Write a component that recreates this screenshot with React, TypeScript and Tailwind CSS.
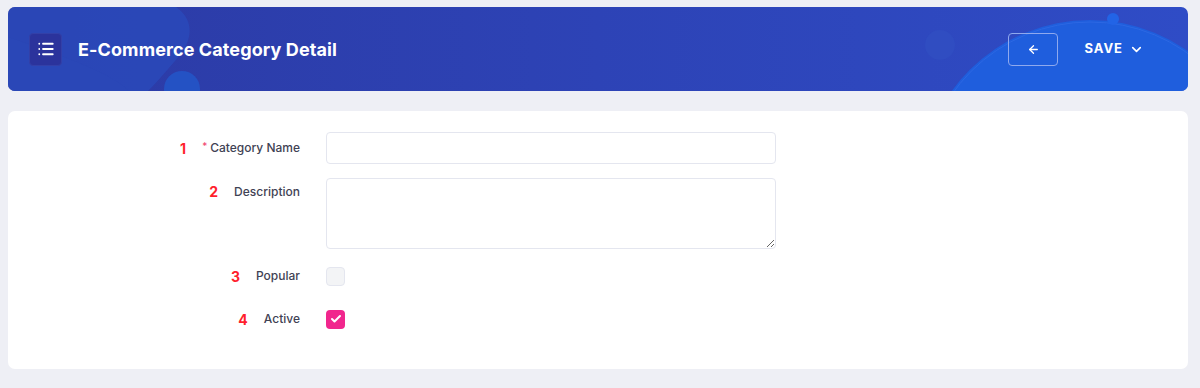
import React from "react";
import { List, ArrowLeft, ChevronDown, Check } from "lucide-react";

function Label({ n, text, required }: { n: string; text: string; required?: boolean }) {
  return (
    <div className="flex items-center justify-end">
      <span className="text-[14px] font-bold text-[#ff1f2d] mr-[16px]">{n}</span>
      {required && <span className="text-[10px] text-[#f1416c] mr-[3px] -mt-[4px]">*</span>}
      <span className="text-[12px] font-medium text-[#3f4254]">{text}</span>
    </div>
  );
}

export default function App() {
  return (
    <div
      className="min-h-[388px] bg-[#eeeff5] pl-[8px] pr-[12px] pt-[7px] pb-[20px]"
      style={{ fontFamily: "Inter, 'Noto Sans', sans-serif" }}
    >
      {/* Header */}
      <div className="relative h-[84px] rounded-[7px] overflow-hidden bg-gradient-to-r from-[#2c3aa4] via-[#2d43b6] to-[#2f4cc6]">
        <svg className="absolute inset-0" width="1180" height="84" viewBox="0 0 1180 84">
          <path d="M0 0 L168 0 C185 12 186 30 172 48 C160 62 150 74 140 84 L0 84 Z" fill="#2a4bbd" opacity="0.7" />
          <path d="M0 30 C60 50 110 70 120 84 L0 84 Z" fill="#2a48b8" opacity="0.5" />
          <circle cx="174" cy="82" r="18" fill="#2454c6" opacity="0.9" />
          <circle cx="932" cy="38" r="15" fill="#3152c4" opacity="0.5" />
          <circle cx="1082" cy="183" r="170" fill="#1f5edd" />
          <circle cx="1082" cy="183" r="168" fill="none" stroke="#3a72ea" strokeWidth="1" opacity="0.5" />
          <circle cx="1105" cy="12" r="6" fill="#2264e6" />
        </svg>
        <div className="relative flex items-center h-full pl-[21px] pr-[44px]">
          <div className="w-[33px] h-[33px] rounded-[4px] bg-[#2b339c] border border-[#3340a8] flex items-center justify-center">
            <List size={18} color="#ffffff" strokeWidth={2.4} />
          </div>
          <h1 className="ml-[16px] text-white text-[18px] font-bold tracking-[0.1px]">E-Commerce Category Detail</h1>
          <div className="ml-auto flex items-center">
            <div className="w-[50px] h-[33px] rounded-[4px] border border-[#8fa9ee] flex items-center justify-center">
              <ArrowLeft size={13} color="#ffffff" strokeWidth={2.4} />
            </div>
            <div className="ml-[26px] flex items-center text-white text-[13px] font-bold tracking-[1px]">
              SAVE
              <ChevronDown size={15} color="#ffffff" strokeWidth={2.6} className="ml-[6px]" />
            </div>
          </div>
        </div>
      </div>

      {/* Card */}
      <div className="mt-[20px] bg-white rounded-[7px] pt-[21px] pb-[36px]">
        <div className="grid grid-cols-[292px_450px] gap-x-[26px]">
          <div className="h-[32px] flex items-center justify-end">
            <Label n="1" text="Category Name" required />
          </div>
          <input className="h-[32px] rounded-[4px] border border-[#e4e6ef] outline-none" />

          <div className="pt-[3px] mt-[14px] flex justify-end items-start">
            <Label n="2" text="Description" />
          </div>
          <textarea className="mt-[14px] h-[71px] rounded-[4px] border border-[#e4e6ef] outline-none block" />

          <div className="mt-[13px] h-[28px] flex items-center justify-end">
            <Label n="3" text="Popular" />
          </div>
          <div className="mt-[13px] h-[28px] flex items-center">
            <div className="w-[19px] h-[19px] rounded-[4px] bg-[#f3f4f6] border border-[#e4e6ef]" />
          </div>

          <div className="mt-[15px] h-[28px] flex items-center justify-end">
            <Label n="4" text="Active" />
          </div>
          <div className="mt-[15px] h-[28px] flex items-center">
            <div className="w-[19px] h-[19px] rounded-[4px] bg-[#f1268d] flex items-center justify-center">
              <Check size={12} color="#ffffff" strokeWidth={4} />
            </div>
          </div>
        </div>
      </div>
    </div>
  );
}
